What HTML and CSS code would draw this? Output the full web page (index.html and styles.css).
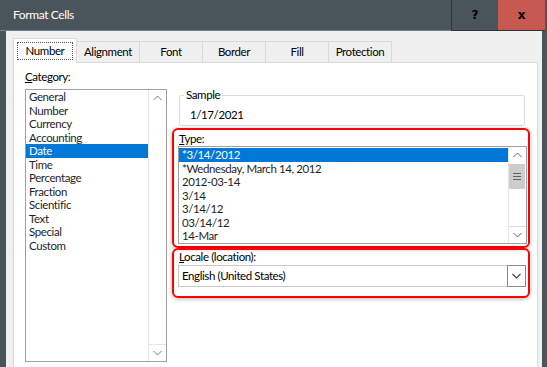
FILE: index.html
```html
<!DOCTYPE html>
<html lang="en">
<head>
    <meta charset="UTF-8" />
    <title>Format Cells</title>
    <link rel="stylesheet" href="styles.css">
</head>
<body>
    <!-- Title bar -->
    <div class="titlebar">
        <div class="title">Format Cells</div>
        <div class="btn-help">?</div>
        <div class="btn-close">x</div>
    </div>

    <div class="dialog">
        <!-- Tabs -->
        <div class="tabs">
            <div class="tab active"><span class="focus">Number</span></div>
            <div class="tab">Alignment</div>
            <div class="tab">Font</div>
            <div class="tab">Border</div>
            <div class="tab">Fill</div>
            <div class="tab">Protection</div>
        </div>

        <div class="panel">
            <!-- Category column -->
            <div class="col-left">
                <div class="label"><u>C</u>ategory:</div>
                <div class="listbox category">
                    <ul class="items">
                        <li>General</li>
                        <li>Number</li>
                        <li>Currency</li>
                        <li>Accounting</li>
                        <li class="selected">Date</li>
                        <li>Time</li>
                        <li>Percentage</li>
                        <li>Fraction</li>
                        <li>Scientific</li>
                        <li>Text</li>
                        <li>Special</li>
                        <li>Custom</li>
                    </ul>
                    <div class="scrollbar">
                        <div class="arrow">
                            <svg width="9" height="6" viewBox="0 0 9 6"><polyline points="0.5,5 4.5,1 8.5,5" fill="none" stroke="#7a7a7a" stroke-width="1"/></svg>
                        </div>
                        <div class="track"></div>
                        <div class="arrow down">
                            <svg width="9" height="6" viewBox="0 0 9 6"><polyline points="0.5,1 4.5,5 8.5,1" fill="none" stroke="#7a7a7a" stroke-width="1"/></svg>
                        </div>
                    </div>
                </div>
            </div>

            <!-- Right column -->
            <div class="col-right">
                <fieldset class="sample">
                    <legend>Sample</legend>
                    <div class="sample-value">1/17/2021</div>
                </fieldset>

                <div class="highlight type-box">
                    <div class="label"><u>T</u>ype:</div>
                    <div class="listbox types">
                        <ul class="items">
                            <li class="selected">*3/14/2012</li>
                            <li>*Wednesday, March 14, 2012</li>
                            <li>2012-03-14</li>
                            <li>3/14</li>
                            <li>3/14/12</li>
                            <li>03/14/12</li>
                            <li>14-Mar</li>
                        </ul>
                        <div class="scrollbar">
                            <div class="arrow">
                                <svg width="9" height="6" viewBox="0 0 9 6"><polyline points="0.5,5 4.5,1 8.5,5" fill="none" stroke="#606060" stroke-width="1"/></svg>
                            </div>
                            <div class="thumb">
                                <svg width="8" height="7" viewBox="0 0 8 7"><path d="M0 0.5h8M0 3.5h8M0 6.5h8" stroke="#606060" stroke-width="1"/></svg>
                            </div>
                            <div class="track"></div>
                            <div class="arrow down boxed">
                                <svg width="9" height="6" viewBox="0 0 9 6"><polyline points="0.5,1 4.5,5 8.5,1" fill="none" stroke="#606060" stroke-width="1"/></svg>
                            </div>
                        </div>
                    </div>
                </div>

                <div class="highlight locale-box">
                    <div class="label"><u>L</u>ocale (location):</div>
                    <div class="combo">
                        <span class="combo-text">English (United States)</span>
                        <span class="combo-btn">
                            <svg width="9" height="6" viewBox="0 0 9 6"><polyline points="0.5,1 4.5,5 8.5,1" fill="none" stroke="#444" stroke-width="1.2"/></svg>
                        </span>
                    </div>
                </div>
            </div>
        </div>
    </div>
</body>
</html>
```

FILE: styles.css
```css
body {
    margin: 0;
    width: 547px;
    height: 367px;
    overflow: hidden;
    background-color: #4a545b;
    font-family: Lato, "Noto Sans", sans-serif;
    font-size: 11.5px;
    letter-spacing: -0.4px;
    color: #000;
}

/* Title bar */
.titlebar {
    display: flex;
    height: 31px;
    padding-right: 2px;
}

.title {
    flex: 1;
    padding-left: 13px;
    line-height: 30px;
    font-size: 12px;
    color: #fff;
    border-bottom: 1px solid #6f8294;
}

.btn-help,
.btn-close {
    width: 46px;
    height: 30px;
    line-height: 30px;
    text-align: center;
    font-family: "DejaVu Sans", sans-serif;
    font-weight: bold;
    font-size: 12px;
    letter-spacing: 0;
    color: #000;
}

.btn-help {
    border-left: 1px solid #2e3439;
    border-bottom: 1px solid #2e3439;
}

.btn-close {
    width: 47px;
    background-color: #c65a50;
    border-bottom: 1px solid #2e3439;
}

/* Dialog body */
.dialog {
    margin: 0 5px 0 6px;
    padding: 6px 4px 0 7px;
    height: 330px;
    background-color: #f0f0f0;
}

.tabs {
    display: flex;
    align-items: flex-end;
    height: 25px;
}

.tab {
    width: 62px;
    height: 20px;
    line-height: 19px;
    margin-left: -1px;
    text-align: center;
    background-color: #f0f0f0;
    border: 1px solid #d9d9d9;
    border-bottom: none;
}

.tab.active {
    position: relative;
    z-index: 1;
    margin-left: 0;
    width: 64px;
    height: 25px;
    margin-bottom: -1px;
    padding-top: 3px;
    box-sizing: border-box;
    background-color: #fff;
}

.tab.active .focus {
    display: block;
    margin: 0 3px;
    height: 16px;
    line-height: 15px;
    border: 1px dotted #555;
}

.panel {
    display: flex;
    height: 300px;
    padding: 7px 7px 0 11px;
    background-color: #fff;
    border: 1px solid #d9d9d9;
}

.label {
    line-height: 14px;
}

/* Listboxes */
.col-left {
    width: 142px;
}

.col-left .label {
    margin-bottom: 5px;
}

.listbox {
    display: flex;
    border: 1px solid #a0a0a0;
    background-color: #fff;
    box-sizing: border-box;
}

.listbox.category {
    height: 273px;
}

.items {
    flex: 1;
    list-style-type: none;
    margin: 0;
    padding: 1px 0 0;
}

.category .items {
    padding-top: 0;
}

.items li {
    height: 13.5px;
    line-height: 13.5px;
    padding-left: 3px;
    color: #1f1f1f;
    white-space: nowrap;
}

.items li.selected {
    background-color: #0078d7;
    color: #fff;
}

.scrollbar {
    display: flex;
    flex-direction: column;
    width: 17px;
    border-left: 1px solid #e6e6e6;
}

.scrollbar .arrow {
    height: 16px;
    display: flex;
    align-items: center;
    justify-content: center;
}

.scrollbar .arrow.down {
    border-top: 1px solid #e6e6e6;
}

.scrollbar .arrow.boxed {
    border-top: 1px solid #dcdcdc;
}

.scrollbar .track {
    flex: 1;
}

.scrollbar .thumb {
    height: 25px;
    margin: 1px 1px 0 0;
    background-color: #cdcdcd;
    display: flex;
    align-items: center;
    justify-content: center;
}

/* Right column */
.col-right {
    width: 358px;
    margin-left: 5px;
}

.sample {
    margin: 18px 5px 0 7px;
    padding: 6px 10px 3px 10px;
    border: 1px solid #dcdcdc;
    border-radius: 3px;
}

.sample legend {
    margin-left: -6px;
    padding: 0 2px;
    line-height: 14px;
}

.sample-value {
    line-height: 14px;
}

.highlight {
    border: 2px solid #ff0000;
    border-radius: 6px;
    box-shadow: 0 1px 4px rgba(0, 0, 0, 0.3);
}

.type-box {
    margin-top: 2px;
    padding: 2px 1px 2px 4px;
}

.type-box .label {
    padding-left: 1px;
}

.listbox.types {
    height: 98px;
}

.locale-box {
    padding: 0 2px 9px 4px;
}

.locale-box .label {
    padding-left: 1px;
}

.combo {
    display: flex;
    margin-top: 1px;
    height: 22px;
    box-sizing: border-box;
    border: 1px solid #c8c8c8;
    background-color: #fff;
}

.combo-text {
    flex: 1;
    padding-left: 3px;
    line-height: 20px;
}

.combo-btn {
    width: 17px;
    margin: -1px -1px -1px 0;
    border: 1px solid #8a8a8a;
    display: flex;
    align-items: center;
    justify-content: center;
}
```
